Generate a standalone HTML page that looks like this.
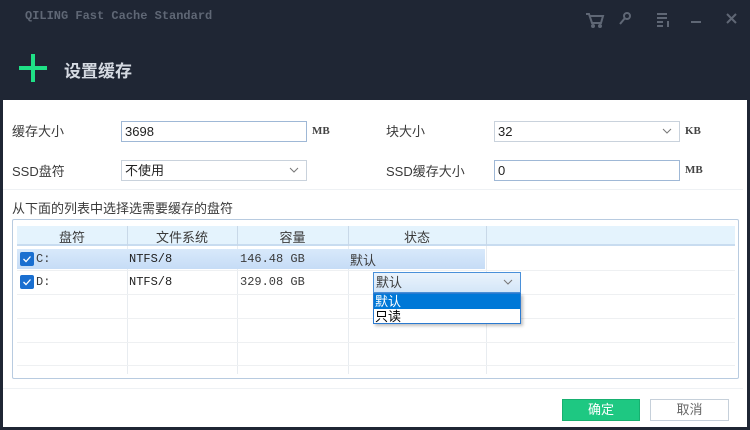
<!DOCTYPE html>
<html><head><meta charset="utf-8"><style>
*{margin:0;padding:0;box-sizing:border-box}
body{width:750px;height:430px;background:#1f2634;position:relative;overflow:hidden;font-family:"Liberation Sans","Noto Sans CJK SC",sans-serif;font-size:13px;color:#3a3a3a}
.a{position:absolute}
.mono{font-family:"Liberation Mono","Noto Sans CJK SC",monospace}
.inp{position:absolute;height:21px;border:1px solid #c9d2dc;background:#fff;font-size:13px;line-height:19px;padding-left:3px;color:#222}
.inp.f{border-color:#9fb8d6}
.chev{position:absolute;right:6px;top:3px;width:12px;height:12px}
.vl{position:absolute;width:1px;background:#e8ecf0}
.hl{position:absolute;height:1px;background:#eef0f2;left:17px;width:718px}
.u{font-family:"Liberation Serif",serif;font-size:11px;font-weight:bold;color:#444;line-height:12px}
</style></head><body>
<div class="a mono" style="left:25px;top:9px;color:#5f6775;font-size:12px;font-weight:bold">QILING Fast Cache Standard</div>
<svg class="a" style="left:580px;top:5px" width="170" height="30" viewBox="0 0 170 30">
<g fill="none" stroke="#5f6775" stroke-width="2">
<path d="M6 9h3l3 9h9l2-7H10"/><circle cx="13" cy="21" r="1"/><circle cx="20" cy="21" r="1"/>
<circle cx="47" cy="11" r="3"/><path d="M45 13l-5 6"/>
<path d="M77 9h10M77 13h10M77 17h6M77 21h6M88 16v6"/>
<path d="M111 17h10"/>
<path d="M147 9l9 9M156 9l-9 9"/></g></svg>
<svg class="a" style="left:18px;top:53px" width="30" height="30"><path d="M15 1v28M1 15h28" stroke="#1fe086" stroke-width="4"/></svg>
<div class="a" style="left:64px;top:57px;color:#d5dae2;font-size:17px;font-weight:bold">设置缓存</div>
<div class="a" style="left:3px;top:100px;width:744px;height:327px;background:#fff"></div>
<div class="a" style="left:12px;top:121px">缓存大小</div>
<div class="inp f" style="left:121px;top:121px;width:186px">3698</div>
<div class="a u" style="left:312px;top:125px">MB</div>
<div class="a" style="left:386px;top:121px">块大小</div>
<div class="inp" style="left:494px;top:121px;width:186px">32<svg class="chev" viewBox="0 0 12 12"><path d="M2 4l4 4 4-4" fill="none" stroke="#777"/></svg></div>
<div class="a u" style="left:685px;top:125px">KB</div>
<div class="a" style="left:12px;top:161px">SSD盘符</div>
<div class="inp" style="left:121px;top:160px;width:186px">不使用<svg class="chev" viewBox="0 0 12 12"><path d="M2 4l4 4 4-4" fill="none" stroke="#777"/></svg></div>
<div class="a" style="left:386px;top:161px">SSD缓存大小</div>
<div class="inp f" style="left:494px;top:160px;width:186px">0</div>
<div class="a u" style="left:685px;top:164px">MB</div>
<div class="a" style="left:3px;top:189px;width:740px;height:1px;background:#eef1f4"></div>
<div class="a" style="left:12px;top:198px">从下面的列表中选择选需要缓存的盘符</div>
<div class="a" style="left:12px;top:219px;width:727px;height:160px;border:1px solid #b8cbe0;border-radius:2px"></div>
<div class="a" style="left:17px;top:226px;width:718px;height:20px;background:#e4f3fd;border-bottom:2px solid #c8dcf0"></div>
<div class="a" style="left:17px;top:227px;width:110px;text-align:center">盘符</div>
<div class="a" style="left:127px;top:227px;width:110px;text-align:center">文件系统</div>
<div class="a" style="left:237px;top:227px;width:111px;text-align:center">容量</div>
<div class="a" style="left:348px;top:227px;width:138px;text-align:center">状态</div>
<div class="vl" style="left:127px;top:226px;height:148px"></div>
<div class="vl" style="left:237px;top:226px;height:148px"></div>
<div class="vl" style="left:348px;top:226px;height:148px"></div>
<div class="vl" style="left:486px;top:226px;height:148px"></div>
<div class="vl" style="left:127px;top:226px;height:20px;background:#c8d8e8"></div>
<div class="vl" style="left:237px;top:226px;height:20px;background:#c8d8e8"></div>
<div class="vl" style="left:348px;top:226px;height:20px;background:#c8d8e8"></div>
<div class="vl" style="left:486px;top:226px;height:20px;background:#c8d8e8"></div>
<div class="a" style="left:17px;top:249px;width:468px;height:20px;background:linear-gradient(#d8e9fb,#c6dcf6)"></div>
<div class="hl" style="top:270px"></div><div class="hl" style="top:294px"></div><div class="hl" style="top:318px"></div><div class="hl" style="top:342px"></div><div class="hl" style="top:365px"></div>
<div class="a" style="left:20px;top:252px;width:14px;height:14px;background:#1a6fd0;border-radius:2px"><svg width="14" height="14"><path d="M3.5 7l2.5 2.5 4.5-5" fill="none" stroke="#fff" stroke-width="1.3"/></svg></div>
<div class="a" style="left:20px;top:275px;width:14px;height:14px;background:#1a6fd0;border-radius:2px"><svg width="14" height="14"><path d="M3.5 7l2.5 2.5 4.5-5" fill="none" stroke="#fff" stroke-width="1.3"/></svg></div>
<div class="a mono" style="left:36px;top:252px;font-size:12px">C:</div>
<div class="a mono" style="left:36px;top:275px;font-size:12px">D:</div>
<div class="a mono" style="left:129px;top:252px;font-size:12px;color:#222">NTFS/8</div>
<div class="a mono" style="left:129px;top:275px;font-size:12px;color:#222">NTFS/8</div>
<div class="a mono" style="left:240px;top:252px;font-size:12px">146.48 GB</div>
<div class="a mono" style="left:240px;top:275px;font-size:12px">329.08 GB</div>
<div class="a" style="left:350px;top:250px">默认</div>
<div class="a" style="left:373px;top:272px;width:148px;height:21px;border:1px solid #4a90d9;background:linear-gradient(#eaf3fc,#d4e6f8);padding-left:2px;line-height:19px">默认<svg class="chev" viewBox="0 0 12 12"><path d="M2 4l4 4 4-4" fill="none" stroke="#777"/></svg></div>
<div class="a" style="left:373px;top:293px;width:148px;height:31px;border:1px solid #2a7ad0;background:#fff;box-shadow:2px 2px 3px rgba(0,0,0,.25)">
<div style="height:15px;background:#0078d7;color:#fff;line-height:15px;padding-left:1px">默认</div>
<div style="line-height:15px;padding-left:1px;color:#000">只读</div></div>
<div class="a" style="left:3px;top:388px;width:740px;height:1px;background:#eef1f4"></div>
<div class="a" style="left:562px;top:399px;width:78px;height:22px;background:#1ec882;border:1px solid #17b070;color:#fff;text-align:center;line-height:20px">确定</div>
<div class="a" style="left:650px;top:399px;width:79px;height:22px;background:#fff;border:1px solid #c6d0da;color:#666;text-align:center;line-height:20px">取消</div>
</body></html>
